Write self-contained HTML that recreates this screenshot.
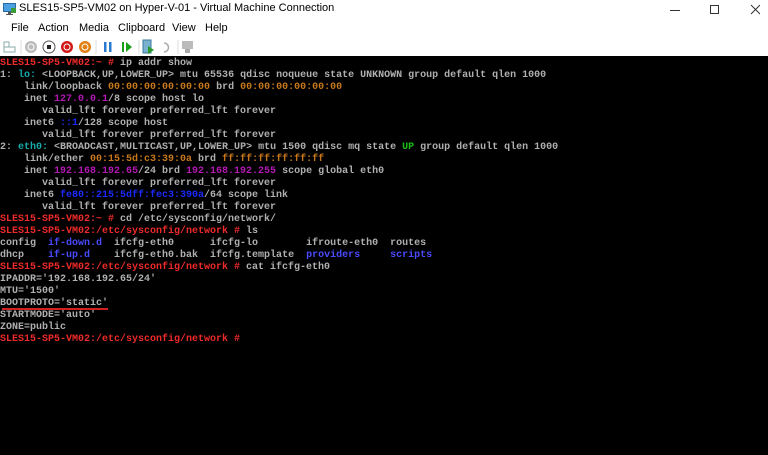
<!DOCTYPE html>
<html><head><style>
*{margin:0;padding:0;box-sizing:border-box}
body{width:768px;height:455px;overflow:hidden;background:#fff;font-family:"Liberation Sans",sans-serif;position:relative}
.title{position:absolute;top:0;left:0;width:768px;height:18px;font-size:11px;color:#000}
.title .t{position:absolute;left:19px;top:2px}
.menu{position:absolute;top:21px;left:0;font-size:11px;height:16px}
.menu span{position:absolute;top:1px}
.tb{position:absolute;top:37px;left:0;width:768px;height:20px}
.term{position:absolute;top:56px;left:0;width:768px;height:399px;background:#000}
pre{position:absolute;top:2px;left:0;font-family:"Liberation Mono",monospace;font-size:10px;line-height:12px;color:#b0b0b0;font-weight:bold;letter-spacing:0}
.r{color:#ee2a2a}.p{color:#b418b4}.o{color:#c8781a}.b{color:#1a2aff}.c{color:#18aaaa}.g{color:#18c018}.lb{color:#4a4aff}
</style></head><body>
<div class="title">
<svg style="position:absolute;left:3px;top:3px" width="13" height="12"><rect x="0.5" y="0.5" width="12" height="8" fill="#4aa0e0" stroke="#2a6aa0"/><rect x="5" y="9" width="3" height="2" fill="#555"/><rect x="3" y="11" width="7" height="1" fill="#555"/><rect x="8" y="5" width="5" height="5" fill="#3a9a3a"/></svg>
<span class="t">SLES15-SP5-VM02 on Hyper-V-01 - Virtual Machine Connection</span>
<svg style="position:absolute;left:670px;top:4px" width="90" height="12"><line x1="0" y1="6.5" x2="10" y2="6.5" stroke="#333"/><rect x="40.5" y="1.5" width="8" height="8" fill="none" stroke="#333"/><path d="M81 1 L90 10 M90 1 L81 10" stroke="#333"/></svg>
</div>
<div class="menu"><span style="left:11px">File</span><span style="left:38px">Action</span><span style="left:79px">Media</span><span style="left:118px">Clipboard</span><span style="left:172px">View</span><span style="left:205px">Help</span></div>
<svg class="tb" width="768" height="20">
<rect x="4" y="5" width="5" height="5" fill="none" stroke="#8aa"/><rect x="4" y="10" width="11" height="5" fill="none" stroke="#8aa"/>
<line x1="21" y1="3" x2="21" y2="17" stroke="#ddd"/>
<circle cx="31" cy="10" r="6" fill="#bbb"/><circle cx="31" cy="10" r="3" fill="none" stroke="#fff"/>
<circle cx="49" cy="10" r="6" fill="#fff" stroke="#555"/><rect x="47" y="8" width="4" height="4" fill="#222"/>
<circle cx="67" cy="10" r="6" fill="#d01818"/><circle cx="67" cy="10" r="3" fill="none" stroke="#fff"/>
<circle cx="85" cy="10" r="6" fill="#e08010"/><circle cx="85" cy="10" r="3" fill="none" stroke="#fff"/>
<line x1="96" y1="3" x2="96" y2="17" stroke="#ddd"/>
<rect x="104" y="5" width="2.5" height="10" fill="#2a7ad0"/><rect x="109" y="5" width="2.5" height="10" fill="#2a7ad0"/>
<rect x="122" y="5" width="2" height="10" fill="#1aa01a"/><path d="M126 5 L132 10 L126 15Z" fill="#1aa01a"/>
<line x1="139" y1="3" x2="139" y2="17" stroke="#ddd"/>
<rect x="143" y="3" width="8" height="13" fill="#7ab0d0" stroke="#3a7aa0"/><path d="M148 9 L154 13 L148 17Z" fill="#2a9a2a"/>
<path d="M164 6 A4 4 0 1 1 164 15" fill="none" stroke="#aaa" stroke-width="1.5"/>
<line x1="178" y1="3" x2="178" y2="17" stroke="#ddd"/>
<rect x="182" y="4" width="11" height="8" fill="#bbb"/><rect x="185" y="12" width="5" height="4" fill="#aaa"/>
</svg>
<div class="term"><pre><span class="r">SLES15-SP5-VM02:~ #</span> ip addr show
1: <span class="c">lo:</span> &lt;LOOPBACK,UP,LOWER_UP&gt; mtu 65536 qdisc noqueue state UNKNOWN group default qlen 1000
    link/loopback <span class="o">00:00:00:00:00:00</span> brd <span class="o">00:00:00:00:00:00</span>
    inet <span class="p">127.0.0.1</span>/8 scope host lo
       valid_lft forever preferred_lft forever
    inet6 <span class="b">::1</span>/128 scope host
       valid_lft forever preferred_lft forever
2: <span class="c">eth0:</span> &lt;BROADCAST,MULTICAST,UP,LOWER_UP&gt; mtu 1500 qdisc mq state <span class="g">UP</span> group default qlen 1000
    link/ether <span class="o">00:15:5d:c3:39:0a</span> brd <span class="o">ff:ff:ff:ff:ff:ff</span>
    inet <span class="p">192.168.192.65</span>/24 brd <span class="p">192.168.192.255</span> scope global eth0
       valid_lft forever preferred_lft forever
    inet6 <span class="b">fe80::215:5dff:fec3:390a</span>/64 scope link
       valid_lft forever preferred_lft forever
<span class="r">SLES15-SP5-VM02:~ #</span> cd /etc/sysconfig/network/
<span class="r">SLES15-SP5-VM02:/etc/sysconfig/network #</span> ls
config  <span class="lb">if-down.d</span>  ifcfg-eth0      ifcfg-lo        ifroute-eth0  routes
dhcp    <span class="lb">if-up.d</span>    ifcfg-eth0.bak  ifcfg.template  <span class="lb">providers</span>     <span class="lb">scripts</span>
<span class="r">SLES15-SP5-VM02:/etc/sysconfig/network #</span> cat ifcfg-eth0
IPADDR='192.168.192.65/24'
MTU='1500'
BOOTPROTO='static'
STARTMODE='auto'
ZONE=public
<span class="r">SLES15-SP5-VM02:/etc/sysconfig/network #</span></pre>
<div style="position:absolute;left:2px;top:252px;width:106px;height:1.5px;background:#d02020"></div>
</div>
</body></html>
